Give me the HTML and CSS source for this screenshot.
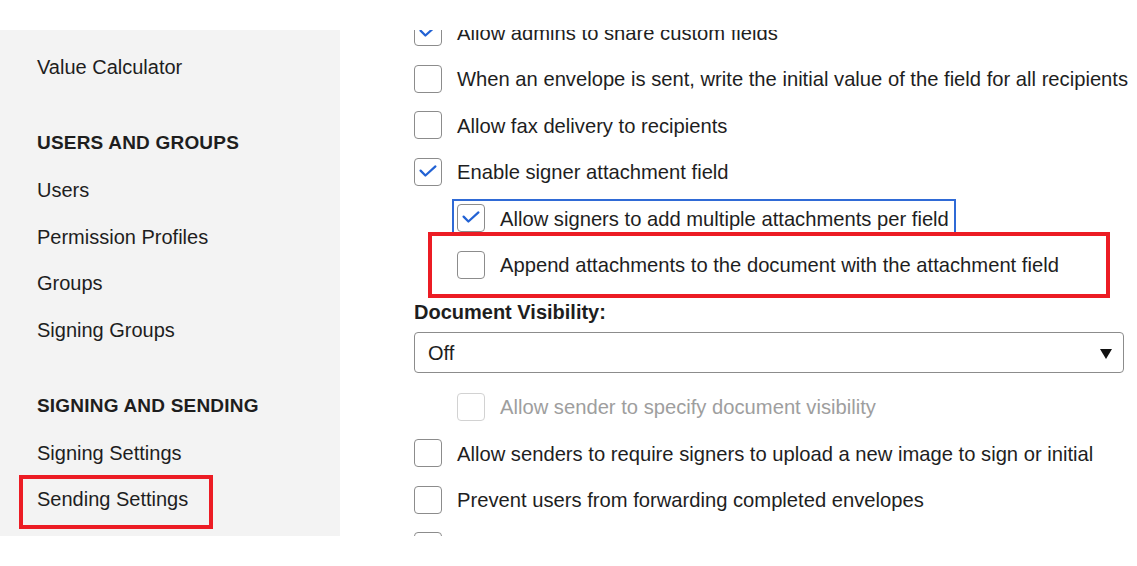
FILE: index.html
```html
<!DOCTYPE html>
<html lang="en">
<head>
<meta charset="utf-8">
<title>Sending Settings</title>
<link rel="stylesheet" href="styles.css">
</head>
<body>
<div class="frame">
  <nav class="sidebar">
    <ul class="nav-list nav-first">
      <li class="nav-item nav-clipped">Apps and Keys</li>
      <li class="nav-item">Value Calculator</li>
    </ul>
    <h3 class="nav-heading">USERS AND GROUPS</h3>
    <ul class="nav-list">
      <li class="nav-item">Users</li>
      <li class="nav-item">Permission Profiles</li>
      <li class="nav-item">Groups</li>
      <li class="nav-item">Signing Groups</li>
    </ul>
    <h3 class="nav-heading">SIGNING AND SENDING</h3>
    <ul class="nav-list">
      <li class="nav-item">Signing Settings</li>
      <li class="nav-item nav-active">Sending Settings</li>
    </ul>
  </nav>
  <main class="content">
    <div class="row">
      <span class="cb"><svg class="check" viewBox="0 0 28 28"><path d="M6 12.5 L11.2 17.8 L22 8"/></svg></span>
      <span class="text">Allow admins to share custom fields</span>
    </div>
    <div class="row">
      <span class="cb"></span>
      <span class="text">When an envelope is sent, write the initial value of the field for all recipients</span>
    </div>
    <div class="row">
      <span class="cb"></span>
      <span class="text">Allow fax delivery to recipients</span>
    </div>
    <div class="row">
      <span class="cb"><svg class="check" viewBox="0 0 28 28"><path d="M6 12.5 L11.2 17.8 L22 8"/></svg></span>
      <span class="text">Enable signer attachment field</span>
    </div>
    <div class="row sub">
      <span class="hl-blue">
        <span class="cb"><svg class="check" viewBox="0 0 28 28"><path d="M6 12.5 L11.2 17.8 L22 8"/></svg></span>
        <span class="text">Allow signers to add multiple attachments per field</span>
      </span>
    </div>
    <div class="row sub hl-red">
      <span class="cb"></span>
      <span class="text">Append attachments to the document with the attachment field</span>
    </div>
    <div class="field-label">Document Visibility:</div>
    <div class="select">
      <span class="select-value">Off</span>
      <svg class="caret" viewBox="0 0 12 10"><path d="M0 0 H12 L6 10 Z"/></svg>
    </div>
    <div class="row sub disabled after-select">
      <span class="cb"></span>
      <span class="text">Allow sender to specify document visibility</span>
    </div>
    <div class="row">
      <span class="cb"></span>
      <span class="text">Allow senders to require signers to upload a new image to sign or initial</span>
    </div>
    <div class="row">
      <span class="cb"></span>
      <span class="text">Prevent users from forwarding completed envelopes</span>
    </div>
    <div class="row">
      <span class="cb"></span>
      <span class="text">Allow recipients to change signing responsibility</span>
    </div>
  </main>
</div>
</body>
</html>
```
FILE: styles.css
```css
html, body {
  margin: 0;
  padding: 0;
  background: #ffffff;
}

body {
  font-family: "Liberation Sans", Arial, sans-serif;
  color: #1e1e1e;
  font-size: 20px;
}

.frame {
  margin-top: 30px;
  height: 506px;
  overflow: hidden;
  display: flex;
}

.sidebar {
  width: 340px;
  flex: none;
  background: #f3f3f3;
  padding-left: 37px;
  box-sizing: border-box;
}

.nav-list {
  list-style: none;
  margin: 0;
  padding: 0;
}

.nav-first {
  margin-top: -32.75px;
}

.nav-item {
  height: 46.5px;
  box-sizing: border-box;
  padding-top: 1px;
  display: flex;
  align-items: center;
  white-space: nowrap;
}

.nav-clipped {
  padding-top: 0;
  padding-bottom: 6px;
}

.nav-active {
  position: relative;
}

.nav-active::after {
  content: "";
  position: absolute;
  left: -18px;
  top: -1px;
  width: 194px;
  height: 54px;
  border: 4px solid #ec1c24;
  box-sizing: border-box;
}

.nav-heading {
  margin: 0;
  padding: 40.75px 0 11.75px;
  line-height: 24px;
  font-size: 19px;
  font-weight: bold;
  letter-spacing: 0.2px;
  white-space: nowrap;
}

.content {
  flex: 1;
  padding-left: 74px;
  margin-top: -21.25px;
}

.row {
  height: 46.5px;
  display: flex;
  align-items: center;
  white-space: nowrap;
}

.text {
  font-size: 20.2px;
  padding-top: 2px;
}

.sub {
  padding-left: 43px;
}

.cb {
  width: 28px;
  height: 28px;
  flex: none;
  box-sizing: border-box;
  border: 1px solid #8c8c8c;
  border-radius: 4px;
  background: #ffffff;
  margin-right: 15px;
  display: flex;
}

.check {
  width: 26px;
  height: 26px;
}

.check path {
  fill: none;
  stroke: #2262d4;
  stroke-width: 2.4;
  stroke-linecap: round;
  stroke-linejoin: round;
}

.hl-blue {
  position: relative;
  display: inline-flex;
  align-items: center;
}

.hl-blue::after {
  content: "";
  position: absolute;
  left: -5px;
  right: -7px;
  top: -5px;
  bottom: -4px;
  border: 2px solid #2f6ad6;
}

.hl-red {
  position: relative;
}

.hl-red::after {
  content: "";
  position: absolute;
  left: 14px;
  top: -9.25px;
  width: 682px;
  height: 66px;
  border: 4px solid #ec1c24;
  box-sizing: border-box;
}

.field-label {
  font-weight: bold;
  line-height: 24px;
  padding: 12.25px 0 8px;
}

.select {
  width: 710px;
  height: 41px;
  box-sizing: border-box;
  border: 1px solid #8c8c8c;
  border-radius: 4px;
  display: flex;
  align-items: center;
  justify-content: space-between;
  padding: 2px 11px 0 13px;
}

.caret {
  width: 12px;
  height: 10px;
  fill: #111111;
}

.after-select {
  margin-top: 10.25px;
}

.disabled .cb {
  border-color: #d2d2d2;
}

.disabled .text {
  color: #9e9e9e;
}
```
